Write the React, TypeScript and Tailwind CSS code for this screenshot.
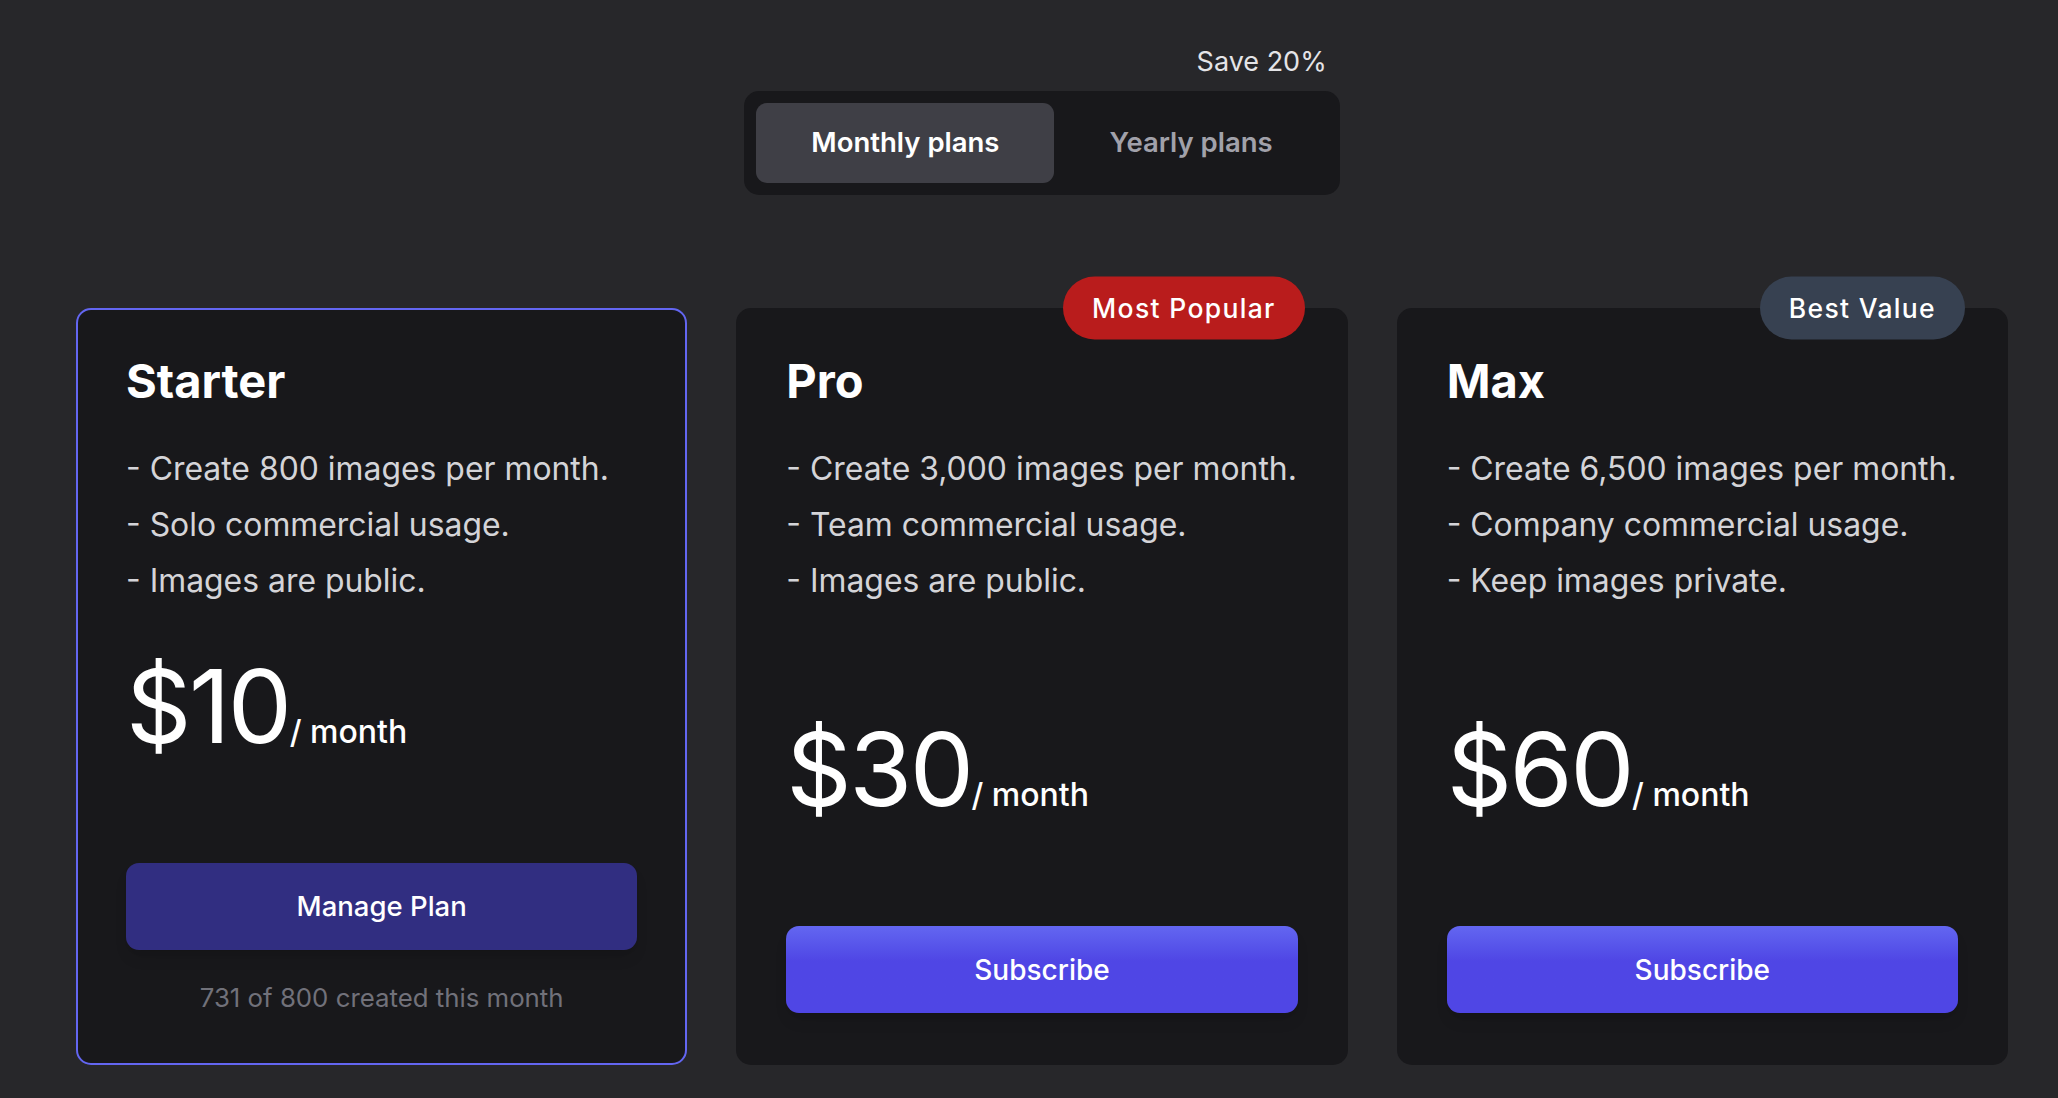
import { useState } from 'react'

type Plan = {
  name: string
  features: string[]
  price: string
  badge?: { label: string; className: string }
  current?: boolean
  usage?: string
}

const plans: Plan[] = [
  {
    name: 'Starter',
    features: ['- Create 800 images per month.', '- Solo commercial usage.', '- Images are public.'],
    price: '$10',
    current: true,
    usage: '731 of 800 created this month',
  },
  {
    name: 'Pro',
    features: ['- Create 3,000 images per month.', '- Team commercial usage.', '- Images are public.'],
    price: '$30',
    badge: { label: 'Most Popular', className: 'bg-[#b91c1c]' },
  },
  {
    name: 'Max',
    features: ['- Create 6,500 images per month.', '- Company commercial usage.', '- Keep images private.'],
    price: '$60',
    badge: { label: 'Best Value', className: 'bg-[#374151]' },
  },
]

function PlanCard({ plan }: { plan: Plan }) {
  return (
    <div
      className={`relative flex flex-col rounded-[15px] bg-[#18181b] px-[48px] pt-[43px] ${
        plan.current ? 'border-2 border-[#6366f1] pb-[47px]' : 'border-2 border-transparent pb-[50px]'
      }`}
    >
      {plan.badge && (
        <div
          className={`absolute right-[41px] top-[-2px] flex h-[63px] -translate-y-1/2 items-center rounded-full px-[29px] text-[26.5px] font-medium tracking-wider text-white ${plan.badge.className}`}
        >
          {plan.badge.label}
        </div>
      )}
      <h2 className="text-[47px] font-bold leading-[56px] text-white">{plan.name}</h2>
      <ul className="mt-[32px] mb-[49px] whitespace-nowrap text-[31.9px] leading-[56px] text-[#d4d4d8]">
        {plan.features.map((f) => (
          <li key={f}>{f}</li>
        ))}
      </ul>
      <div className="mt-auto">
        <div className="flex items-baseline text-white">
          <span className="text-[102px] leading-[96px] font-normal tracking-tight">{plan.price}</span>
          <span className="text-[32px] font-medium">/ month</span>
        </div>
        {plan.current ? (
          <>
            <button className="mt-[107px] flex h-[87px] w-full items-center justify-center rounded-[13px] bg-[#312e81] text-[27.5px] font-medium text-white shadow-lg">
              Manage Plan
            </button>
            <p className="mt-[30px] text-center text-[25.8px] leading-[36px] text-[#71717a]">{plan.usage}</p>
          </>
        ) : (
          <button className="mt-[107px] flex h-[87px] w-full items-center justify-center rounded-[13px] bg-linear-to-b from-[#6366f1] to-[#4f46e5] to-40% text-[28px] font-medium text-white shadow-lg">
            Subscribe
          </button>
        )}
      </div>
    </div>
  )
}

export default function App() {
  const [yearly, setYearly] = useState(false)

  return (
    <div className="min-h-screen bg-[#27272a] font-['Inter','Noto_Sans',sans-serif]">
      <div className="pl-[76px] pr-[50px] pt-[46px] pb-[36px]">
        <div className="flex flex-col items-center">
          <div className="flex flex-col items-end">
            <div className="pr-[13px] text-[27px] leading-[32px] font-normal text-[#e4e4e7]">Save 20%</div>
            <div className="mt-[13px] flex rounded-[15px] bg-[#18181b] p-[12px]">
              <button
                onClick={() => setYearly(false)}
                className={`h-[80px] rounded-[11px] px-[55px] text-[27.5px] font-semibold ${
                  !yearly ? 'bg-[#3f3f46] text-white' : 'text-[#a1a1aa]'
                }`}
              >
                Monthly plans
              </button>
              <button
                onClick={() => setYearly(true)}
                className={`h-[80px] rounded-[11px] px-[55px] text-[27.5px] font-semibold ${
                  yearly ? 'bg-[#3f3f46] text-white' : 'text-[#a1a1aa]'
                }`}
              >
                Yearly plans
              </button>
            </div>
          </div>
        </div>

        <div className="mt-[113px] grid grid-cols-3 gap-[49px]">
          {plans.map((p) => (
            <PlanCard key={p.name} plan={p} />
          ))}
        </div>
      </div>
    </div>
  )
}
